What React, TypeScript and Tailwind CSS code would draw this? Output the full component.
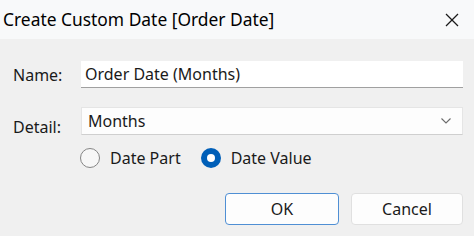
import React from "react"

function Radio({ checked, label }: { checked: boolean; label: string }) {
    return (
        <label className="flex items-center gap-[10px]">
            {checked ? (
                <span className="flex h-[20px] w-[20px] items-center justify-center rounded-full bg-[#005fb8]">
                    <span className="h-[8px] w-[8px] rounded-full bg-white" />
                </span>
            ) : (
                <span className="h-[20px] w-[20px] rounded-full border border-[#858585] bg-[#f7f7f7]" />
            )}
            <span>{label}</span>
        </label>
    )
}

export default function App() {
    return (
        <div
            className="flex h-[236px] w-[474px] flex-col bg-[#f0f0f0] text-[16px] text-[#1a1a1a]"
            style={{ fontFamily: '"Segoe UI", "Noto Sans", sans-serif' }}
        >
            <div className="flex h-[39px] shrink-0 items-center justify-between bg-[#f8f9fa] pl-[3px] pr-[14px]">
                <span className="text-[17.4px] text-black">Create Custom Date [Order Date]</span>
                <svg width="16" height="16" viewBox="0 0 16 16" fill="none" stroke="#1a1a1a" strokeWidth="1.2">
                    <line x1="2" y1="2" x2="14" y2="14" />
                    <line x1="14" y1="2" x2="2" y2="14" />
                </svg>
            </div>

            <div className="flex flex-col px-[13px] pt-[22px]">
                <div className="flex h-[27px] items-center">
                    <span className="w-[68px] shrink-0">Name:</span>
                    <div className="flex h-[27px] flex-1 items-center border-b border-[#a0a0a0] bg-white px-[4px] mr-[-2px]">
                        Order Date (Months)
                    </div>
                </div>

                <div className="mt-[19px] flex items-start">
                    <span className="w-[68px] shrink-0 pt-[8px]">Detail:</span>
                    <div className="flex h-[28px] flex-1 items-center justify-between border border-[#e5e5e5] border-b-[#cfcfcf] bg-[#fdfdfd] pl-[6px] pr-[10px] mr-[-2px]">
                        <span>Months</span>
                        <svg width="12" height="8" viewBox="0 0 12 8" fill="none" stroke="#6b6b6b" strokeWidth="1.1">
                            <polyline points="1.5,1.5 6,6 10.5,1.5" />
                        </svg>
                    </div>
                </div>

                <div className="mt-[7px] flex items-center gap-[20px] pl-[67px]">
                    <Radio checked={false} label="Date Part" />
                    <Radio checked={true} label="Date Value" />
                </div>

                <div className="mt-[23px] flex justify-end gap-[12px] mr-[-2px]">
                    <button className="h-[32px] w-[114px] rounded-[4px] border border-[#4f8fd4] bg-[#fdfdfd]">
                        OK
                    </button>
                    <button className="h-[32px] w-[112px] rounded-[4px] border border-[#e0e0e0] bg-[#fdfdfd]">
                        Cancel
                    </button>
                </div>
            </div>
        </div>
    )
}
